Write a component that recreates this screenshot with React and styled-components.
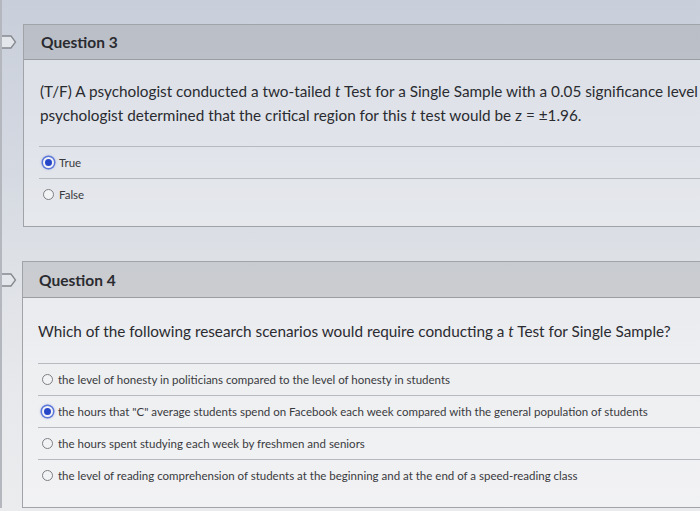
import React from 'react';
import styled, { createGlobalStyle } from 'styled-components';

const GlobalStyle = createGlobalStyle`
  html, body {
    margin: 0;
    padding: 0;
  }
  body {
    width: 700px;
    height: 511px;
    overflow: hidden;
    font-family: Lato, "Open Sans", "Liberation Sans", sans-serif;
    color: #2c2d32;
    background: linear-gradient(180deg, #c9cfda 0%, #d3d8e1 30%, #dde0e5 50%, #e6e8eb 75%, #ebecee 100%);
  }
`;

const Page = styled.div`
  display: flex;
  flex-direction: column;
  gap: 34px;
  padding-top: 24px;
  width: 700px;
  overflow: hidden;
  border-left: 2px solid #b4b7bd;
  box-sizing: border-box;
`;

const QuestionRow = styled.div`
  display: flex;
  align-items: flex-start;
`;

const Gutter = styled.div`
  flex: 0 0 ${(p) => p.$width}px;
  height: ${(p) => p.$headerHeight}px;
  display: flex;
  align-items: center;
  margin-left: -2px;
`;

const Panel = styled.section`
  flex: 0 0 720px;
  border: 1px solid #a0a3a8;
  border-right: none;
`;

const Header = styled.div`
  height: ${(p) => p.$height}px;
  box-sizing: border-box;
  display: flex;
  align-items: center;
  padding-left: ${(p) => p.$indent}px;
  background: rgba(118, 118, 118, 0.2);
  border-bottom: 1px solid #9a9da2;
  font-size: 15.5px;
  font-weight: 700;
  color: #2a2b30;
`;

const Body = styled.div`
  padding: ${(p) => p.$top}px 0 ${(p) => p.$bottom}px;
  background: rgba(255, 255, 255, 0.32);
`;

const Prompt = styled.p`
  margin: 0 0 ${(p) => p.$gap}px;
  padding-left: ${(p) => p.$indent}px;
  font-size: 15.3px;
  line-height: 24px;
  color: #2a2b30;
  white-space: nowrap;
`;

const Answers = styled.div`
  margin-left: 15px;
`;

const AnswerRow = styled.label`
  display: flex;
  align-items: center;
  gap: 5px;
  height: ${(p) => p.$height}px;
  padding-left: 4px;
  border-top: 1px solid #b6b9bf;
  font-size: ${(p) => p.$size}px;
  color: #393a3e;
  white-space: nowrap;
`;

const Radio = styled.span`
  flex: 0 0 auto;
  box-sizing: border-box;
  width: 11px;
  height: 11px;
  border-radius: 50%;
  border: 1px solid #7b7e84;
  background: #f2f3f5;
  ${(p) =>
    p.$checked &&
    `
    width: 11px;
    height: 11px;
    border: 2px solid #f3f4f8;
    background: #2747c9;
    box-shadow: 0 0 0 1.5px #5c77d8, 0 0 3px 1px rgba(70, 100, 220, 0.45);
  `}
`;

const Flag = () => (
  <svg width="17" height="14" viewBox="0 0 17 14" style={{ overflow: 'visible' }}>
    <path d="M-3 1 H11 L15.5 7 L11 13 H-3 Z" fill="#e3e6eb" stroke="#85888e" strokeWidth="1.3" />
  </svg>
);

const Question = ({ gutter, headerHeight, indent, title, prompt, bodyTop, promptGap, bodyBottom, rowHeight, optionSize, options }) => (
  <QuestionRow>
    <Gutter $width={gutter} $headerHeight={headerHeight + 1}>
      <Flag />
    </Gutter>
    <Panel>
      <Header $height={headerHeight} $indent={indent}>{title}</Header>
      <Body $top={bodyTop} $bottom={bodyBottom}>
        <Prompt $indent={indent - 1} $gap={promptGap}>{prompt}</Prompt>
        <Answers>
          {options.map((o) => (
            <AnswerRow key={o.text} $height={rowHeight} $size={optionSize}>
              <Radio $checked={o.checked} />
              {o.text}
            </AnswerRow>
          ))}
        </Answers>
      </Body>
    </Panel>
  </QuestionRow>
);

export default function App() {
  return (
    <>
      <GlobalStyle />
      <Page>
        <Question
          gutter={23}
          headerHeight={35}
          indent={17}
          title="Question 3"
          bodyTop={19}
          promptGap={19}
          bodyBottom={16}
          rowHeight={31}
          optionSize={11.5}
          prompt={
            <>
              (T/F) A psychologist conducted a two-tailed <i>t</i> Test for a Single Sample with a 0.05 significance level
              <br />
              psychologist determined that the critical region for this <i>t</i> test would be z = ±1.96.
            </>
          }
          options={[
            { text: 'True', checked: true },
            { text: 'False', checked: false },
          ]}
        />
        <Question
          gutter={22}
          headerHeight={36}
          indent={16}
          title="Question 4"
          bodyTop={21}
          promptGap={20}
          bodyBottom={16}
          rowHeight={31}
          optionSize={11.5}
          prompt={
            <>
              Which of the following research scenarios would require conducting a <i>t</i> Test for Single Sample?
            </>
          }
          options={[
            { text: 'the level of honesty in politicians compared to the level of honesty in students', checked: false },
            { text: 'the hours that "C" average students spend on Facebook each week compared with the general population of students', checked: true },
            { text: 'the hours spent studying each week by freshmen and seniors', checked: false },
            { text: 'the level of reading comprehension of students at the beginning and at the end of a speed-reading class', checked: false },
          ]}
        />
      </Page>
    </>
  );
}
